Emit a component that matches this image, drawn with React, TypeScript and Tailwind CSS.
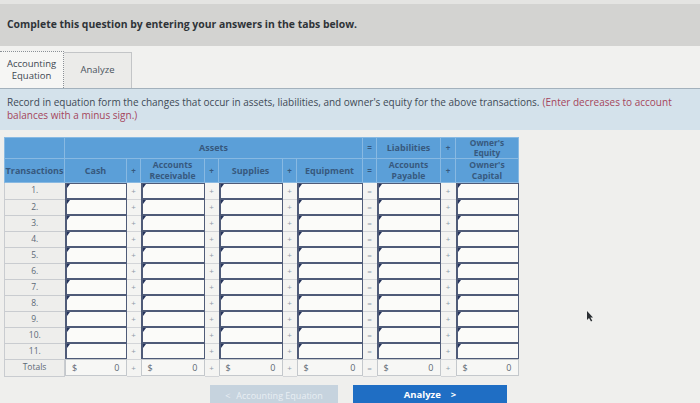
import React from 'react'

const font = { fontFamily: '"Open Sans", "Noto Sans", "DejaVu Sans", sans-serif' }

const colClasses = [
  'w-[60px]',
  'w-[62px]',
  'w-[14px]',
  'w-[64px]',
  'w-[14px]',
  'w-[64px]',
  'w-[14px]',
  'w-[66px]',
  'w-[14px]',
  'w-[64px]',
  'w-[15px]',
  'w-[63px]',
]

const ops = ['+', '+', '+', '=', '+']
const rows = ['1.', '2.', '3.', '4.', '5.', '6.', '7.', '8.', '9.', '10.', '11.']

function InputCell() {
  return (
    <td className="p-0 h-[16px] bg-[#f3f3f1]">
      <div className="relative h-[16px] bg-[#fbfbf9] border border-[#4f5b78] border-l-2">
        <span className="absolute left-0 top-0 w-0 h-0 border-t-[4px] border-t-[#26345c] border-r-[3px] border-r-transparent" />
      </div>
    </td>
  )
}

function OpCell({ op }: { op: string }) {
  return (
    <td className="p-0 h-[16px] text-center text-[8px] text-[#8e9ba8] bg-[#f4f4f2] border-b border-[#d3d5d8]">
      {op}
    </td>
  )
}

function TotalCell() {
  return (
    <td className="p-0 h-[17px] bg-[#f3f3f1]">
      <div className="flex h-[17px] items-center justify-between px-[6px] bg-[#f7f7f5] border border-[#c4c8cc] text-[9px] text-[#5d6874]">
        <span>$</span>
        <span>0</span>
      </div>
    </td>
  )
}

function HeadLines({ top, bottom }: { top: string; bottom: string }) {
  return (
    <div className="flex flex-col items-center text-[8.6px] leading-[11px]">
      <span>{top}</span>
      <span>{bottom}</span>
    </div>
  )
}

export default function App() {
  return (
    <div className="relative w-[700px] h-[403px] overflow-hidden bg-[#efefed] text-[#3a4652]" style={font}>
      {/* Question banner */}
      <div className="h-[4px] bg-[#e4e4e2]" />
      <div className="flex h-[42px] items-center pl-[7px] bg-[#d3d3d1]">
        <span className="text-[10.4px] font-bold text-[#2f3338]">
          Complete this question by entering your answers in the tabs below.
        </span>
      </div>

      {/* Tabs */}
      <div className="flex h-[42px] items-end pt-[5px] bg-[#f1f1ef]">
        <div className="flex h-[37px] w-[64px] flex-col items-center justify-center border-t border-r border-dotted border-[#8a9096] bg-[#f6f6f4] text-[9.5px] leading-[12px] text-[#3c4650]">
          <span>Accounting</span>
          <span>Equation</span>
        </div>
        <div className="flex h-[36px] w-[68px] items-center justify-center border-t border-r border-[#c3c5c7] bg-[#ebebe9] text-[9.5px] text-[#4a545e]">
          Analyze
        </div>
      </div>

      {/* Instructions */}
      <div className="h-[42px] border-t border-[#a3b1bc] bg-[#d4e2eb] pl-[7px] pt-[7px] text-[10px] leading-[13px] text-[#3e4a56]">
        <div className="flex gap-[3px] whitespace-nowrap">
          <span>
            Record in equation form the changes that occur in assets, liabilities, and owner's equity for the above
            transactions.
          </span>
          <span className="text-[#a5455c]">(Enter decreases to account</span>
        </div>
        <div className="text-[#a5455c]">balances with a minus sign.)</div>
      </div>

      {/* Equation table */}
      <div className="pl-[4px] pt-[7px]">
        <table className="table-fixed border-collapse w-[514px]">
          <colgroup>
            {colClasses.map((c, i) => (
              <col key={i} className={c} />
            ))}
          </colgroup>
          <thead>
            <tr className="h-[21px] bg-[#5b9fd8] text-[9px] font-bold text-[#37597e]">
              <th className="p-0 border border-[#88b9e2]" />
              <th colSpan={7} className="p-0 border border-[#88b9e2] font-bold">Assets</th>
              <th className="p-0 border border-[#88b9e2] text-[8px]">=</th>
              <th className="p-0 border border-[#88b9e2]">Liabilities</th>
              <th className="p-0 border border-[#88b9e2] text-[8px]">+</th>
              <th className="p-0 border border-[#88b9e2]">
                <div className="flex flex-col items-center text-[8.4px] leading-[10px]">
                  <span>Owner's</span>
                  <span>Equity</span>
                </div>
              </th>
            </tr>
            <tr className="h-[24px] bg-[#5b9fd8] text-[9px] font-bold text-[#37597e]">
              <th className="p-0 border border-[#88b9e2] text-center">Transactions</th>
              <th className="p-0 border border-[#88b9e2]">Cash</th>
              <th className="p-0 border border-[#88b9e2] text-[8px]">+</th>
              <th className="p-0 border border-[#88b9e2]">
                <HeadLines top="Accounts" bottom="Receivable" />
              </th>
              <th className="p-0 border border-[#88b9e2] text-[8px]">+</th>
              <th className="p-0 border border-[#88b9e2]">Supplies</th>
              <th className="p-0 border border-[#88b9e2] text-[8px]">+</th>
              <th className="p-0 border border-[#88b9e2]">Equipment</th>
              <th className="p-0 border border-[#88b9e2] text-[8px]">=</th>
              <th className="p-0 border border-[#88b9e2]">
                <HeadLines top="Accounts" bottom="Payable" />
              </th>
              <th className="p-0 border border-[#88b9e2] text-[8px]">+</th>
              <th className="p-0 border border-[#88b9e2]">
                <HeadLines top="Owner's" bottom="Capital" />
              </th>
            </tr>
          </thead>
          <tbody>
            {rows.map((r) => (
              <tr key={r}>
                <td className="p-0 h-[16px] text-center text-[8.5px] text-[#5c6976] bg-[#eeeeec] border-l border-b border-[#c9ccd0]">
                  {r}
                </td>
                <InputCell />
                <OpCell op={ops[0]} />
                <InputCell />
                <OpCell op={ops[1]} />
                <InputCell />
                <OpCell op={ops[2]} />
                <InputCell />
                <OpCell op={ops[3]} />
                <InputCell />
                <OpCell op={ops[4]} />
                <InputCell />
              </tr>
            ))}
            <tr>
              <td className="p-0 h-[17px] text-center text-[8.5px] text-[#5c6976] bg-[#eeeeec] border border-[#c9ccd0]">
                Totals
              </td>
              <TotalCell />
              <OpCell op="+" />
              <TotalCell />
              <OpCell op="+" />
              <TotalCell />
              <OpCell op="+" />
              <TotalCell />
              <OpCell op="=" />
              <TotalCell />
              <OpCell op="+" />
              <TotalCell />
            </tr>
          </tbody>
        </table>
      </div>

      {/* Navigation buttons */}
      <div className="flex gap-[15px] pl-[210px] pt-[8px]">
        <button className="flex h-[22px] w-[128px] items-center justify-center gap-[6px] bg-[#c6d3de] text-[9px] text-[#e8eef3]">
          <span>&lt;</span>
          <span>Accounting Equation</span>
        </button>
        <button className="flex h-[22px] w-[154px] items-center justify-center gap-[10px] bg-[#1f6ec4] text-[9.5px] font-bold text-white">
          <span>Analyze</span>
          <span>&gt;</span>
        </button>
      </div>

      {/* Mouse pointer */}
      <svg className="absolute left-[586px] top-[310px]" width="8" height="12" viewBox="0 0 8 12">
        <path d="M1 1 L1 10 L3 8 L5 11.5 L6.3 10.8 L4.4 7.6 L7 7.4 Z" fill="#2b2f33" />
      </svg>
    </div>
  )
}
